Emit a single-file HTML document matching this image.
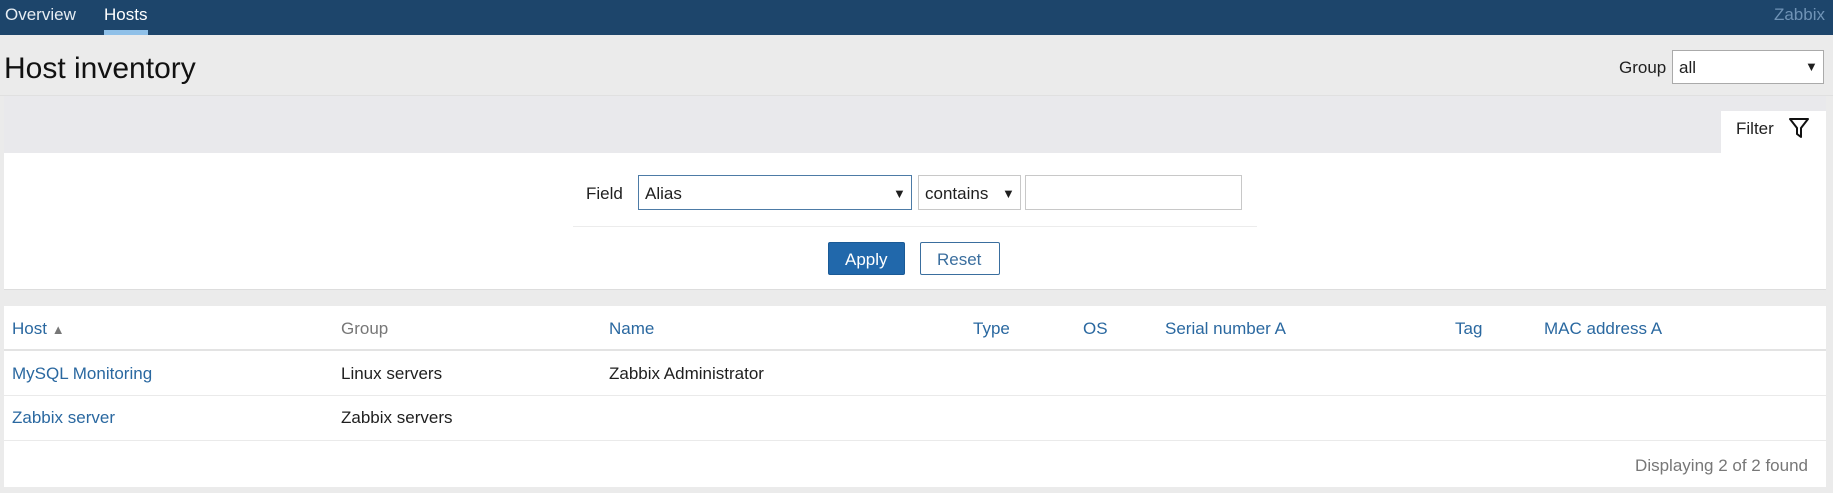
<!DOCTYPE html>
<html><head><meta charset="utf-8"><style>
*{box-sizing:border-box;margin:0;padding:0}
body{width:1833px;height:493px;background:#ebebeb;font-family:"Liberation Sans",sans-serif;position:relative;overflow:hidden;color:#1f1f1f}
.a{position:absolute}
.nav{left:0;top:0;width:1833px;height:35px;background:#1d456b}
.t{position:absolute;white-space:nowrap}
.lnk{color:#2a68a0}
</style></head><body>
<div class="a nav"></div>
<div class="t" style="left:5px;top:5px;font-size:17px;color:#e6edf3">Overview</div>
<div class="t" style="left:104px;top:5px;font-size:17px;color:#fff">Hosts</div>
<div class="a" style="left:104px;top:30px;width:44px;height:5px;background:#8fc0e8"></div>
<div class="t" style="right:8px;top:5px;font-size:17px;color:#6f93b6">Zabbix</div>
<div class="t" style="left:4px;top:52px;font-size:30px;color:#111">Host inventory</div>
<div class="t" style="left:1619px;top:58px;font-size:17px">Group</div>
<div class="a" style="left:1672px;top:50px;width:152px;height:34px;background:#fff;border:1px solid #aaa"></div>
<div class="t" style="left:1679px;top:58px;font-size:17px">all</div>
<div class="t" style="left:1805px;top:59px;font-size:13px">▼</div>
<div class="a" style="left:0;top:95px;width:1833px;height:1px;background:#e0e0e0"></div>
<div class="a" style="left:4px;top:96px;width:1822px;height:57px;background:#e9e9ec"></div>
<div class="a" style="left:1721px;top:111px;width:105px;height:43px;background:#fff"></div>
<div class="t" style="left:1736px;top:119px;font-size:17px">Filter</div>
<svg class="a" style="left:1788px;top:117px" width="22" height="22" viewBox="0 0 22 22"><path d="M2 2h18l-7 9v9l-4-3v-6z" fill="none" stroke="#111" stroke-width="2" stroke-linejoin="round"/></svg>
<div class="a" style="left:4px;top:153px;width:1822px;height:137px;background:#fff;border-bottom:1px solid #ddd"></div>
<div class="t" style="left:586px;top:184px;font-size:17px">Field</div>
<div class="a" style="left:638px;top:175px;width:274px;height:35px;border:1px solid #4d7ba6;background:#fff"></div>
<div class="t" style="left:645px;top:184px;font-size:17px">Alias</div>
<div class="t" style="left:893px;top:186px;font-size:13px">▼</div>
<div class="a" style="left:918px;top:175px;width:103px;height:35px;border:1px solid #c8c8c8"></div>
<div class="t" style="left:925px;top:184px;font-size:17px">contains</div>
<div class="t" style="left:1002px;top:186px;font-size:13px">▼</div>
<div class="a" style="left:1025px;top:175px;width:217px;height:35px;border:1px solid #c8c8c8"></div>
<div class="a" style="left:573px;top:226px;width:684px;height:1px;background:#ececec"></div>
<div class="a" style="left:828px;top:242px;width:77px;height:33px;background:#2168ab;border:1px solid #1a5a96;border-radius:2px"></div>
<div class="t" style="left:845px;top:250px;font-size:17px;color:#fff">Apply</div>
<div class="a" style="left:920px;top:242px;width:80px;height:33px;border:1px solid #3a6e9e;border-radius:2px;background:#fff"></div>
<div class="t" style="left:937px;top:250px;font-size:17px;color:#3a6e9e">Reset</div>
<div class="a" style="left:4px;top:306px;width:1822px;height:181px;background:#fff"></div>
<div class="a" style="left:4px;top:349px;width:1822px;height:2px;background:#e3e3e3"></div>
<div class="a" style="left:4px;top:395px;width:1822px;height:1px;background:#eaeaea"></div>
<div class="a" style="left:4px;top:440px;width:1822px;height:1px;background:#eaeaea"></div>
<div class="t lnk" style="left:12px;top:319px;font-size:17px">Host <span style="color:#777;font-size:13px">▲</span></div>
<div class="t" style="left:341px;top:319px;font-size:17px;color:#777">Group</div>
<div class="t lnk" style="left:609px;top:319px;font-size:17px">Name</div>
<div class="t lnk" style="left:973px;top:319px;font-size:17px">Type</div>
<div class="t lnk" style="left:1083px;top:319px;font-size:17px">OS</div>
<div class="t lnk" style="left:1165px;top:319px;font-size:17px">Serial number A</div>
<div class="t lnk" style="left:1455px;top:319px;font-size:17px">Tag</div>
<div class="t lnk" style="left:1544px;top:319px;font-size:17px">MAC address A</div>
<div class="t lnk" style="left:12px;top:364px;font-size:17px">MySQL Monitoring</div>
<div class="t" style="left:341px;top:364px;font-size:17px">Linux servers</div>
<div class="t" style="left:609px;top:364px;font-size:17px">Zabbix Administrator</div>
<div class="t lnk" style="left:12px;top:408px;font-size:17px">Zabbix server</div>
<div class="t" style="left:341px;top:408px;font-size:17px">Zabbix servers</div>
<div class="t" style="right:25px;top:456px;font-size:17px;color:#777">Displaying 2 of 2 found</div>
</body></html>
